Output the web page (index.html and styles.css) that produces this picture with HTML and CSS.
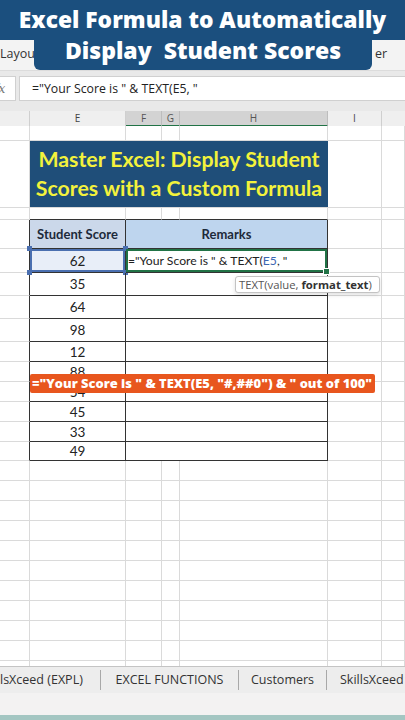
FILE: index.html
```html
<!DOCTYPE html>
<html>
<head>
<meta charset="utf-8">
<link rel="stylesheet" href="styles.css">
</head>
<body>
<div class="page">
  <header class="title">
    <div class="title-wide">Excel Formula to Automatically</div>
    <div class="title-row">
      <span class="rib-tab rib-left">Layou</span>
      <div class="title-narrow">Display&nbsp; Student Scores</div>
      <span class="rib-tab rib-right">er</span>
    </div>
  </header>

  <div class="fbar">
    <div class="namebox"><span class="fx">fx</span></div>
    <div class="finput">="Your Score is " &amp; TEXT(E5, "</div>
  </div>

  <div class="colhdr">
    <div class="ch"></div>
    <div class="ch">E</div>
    <div class="ch sel">F</div>
    <div class="ch sel">G</div>
    <div class="ch sel">H</div>
    <div class="ch">I</div>
    <div class="ch last"></div>
  </div>

  <div class="sheet">
    <div class="row h15"><div class="c"></div><div class="c"></div><div class="c"></div><div class="c"></div><div class="c"></div><div class="c"></div><div class="c"></div></div>
    <div class="row h67"><div class="c"></div><div class="banner"><span>Master Excel: Display Student</span><span>Scores with a Custom Formula</span></div><div class="c"></div><div class="c"></div></div>
    <div class="row h12"><div class="c"></div><div class="c db"></div><div class="c db"></div><div class="c db"></div><div class="c db"></div><div class="c"></div><div class="c"></div></div>

    <div class="row h29"><div class="c dr"></div><div class="t hd hd-e">Student Score</div><div class="t hd hd-r span3">Remarks</div><div class="c"></div><div class="c"></div></div>
    <div class="row h24"><div class="c dr"></div><div class="t num e5">62<i class="hd1"></i><i class="hd2"></i><i class="hd3"></i><i class="hd4"></i></div><div class="t span3 edit">="Your Score is " &amp; TEXT(<span class="ref">E5</span>, "<i class="ghandle"></i></div><div class="c"></div><div class="c"></div></div>
    <div class="row h23"><div class="c dr"></div><div class="t num">35</div><div class="t span3"></div><div class="c"></div><div class="c"></div></div>
    <div class="row h23"><div class="c dr"></div><div class="t num">64</div><div class="t span3"></div><div class="c"></div><div class="c"></div></div>
    <div class="row h23"><div class="c dr"></div><div class="t num">98</div><div class="t span3"></div><div class="c"></div><div class="c"></div></div>
    <div class="row h20"><div class="c dr"></div><div class="t num">12</div><div class="t span3"></div><div class="c"></div><div class="c"></div></div>
    <div class="row h20"><div class="c dr"></div><div class="t num">88</div><div class="t span3"></div><div class="c"></div><div class="c"></div></div>
    <div class="row h20"><div class="c dr"></div><div class="t num">54</div><div class="t span3"></div><div class="c"></div><div class="c"></div></div>
    <div class="row h20"><div class="c dr"></div><div class="t num">45</div><div class="t span3"></div><div class="c"></div><div class="c"></div></div>
    <div class="row h20"><div class="c dr"></div><div class="t num">33</div><div class="t span3"></div><div class="c"></div><div class="c"></div></div>
    <div class="row h19"><div class="c dr"></div><div class="t num">49</div><div class="t span3"></div><div class="c"></div><div class="c"></div></div>

    <div class="row h20"><div class="c"></div><div class="c"></div><div class="c"></div><div class="c"></div><div class="c"></div><div class="c"></div><div class="c"></div></div>
    <div class="row h20"><div class="c"></div><div class="c"></div><div class="c"></div><div class="c"></div><div class="c"></div><div class="c"></div><div class="c"></div></div>
    <div class="row h20"><div class="c"></div><div class="c"></div><div class="c"></div><div class="c"></div><div class="c"></div><div class="c"></div><div class="c"></div></div>
    <div class="row h20"><div class="c"></div><div class="c"></div><div class="c"></div><div class="c"></div><div class="c"></div><div class="c"></div><div class="c"></div></div>
    <div class="row h20"><div class="c"></div><div class="c"></div><div class="c"></div><div class="c"></div><div class="c"></div><div class="c"></div><div class="c"></div></div>
    <div class="row h20"><div class="c"></div><div class="c"></div><div class="c"></div><div class="c"></div><div class="c"></div><div class="c"></div><div class="c"></div></div>
    <div class="row h20"><div class="c"></div><div class="c"></div><div class="c"></div><div class="c"></div><div class="c"></div><div class="c"></div><div class="c"></div></div>
    <div class="row h20"><div class="c"></div><div class="c"></div><div class="c"></div><div class="c"></div><div class="c"></div><div class="c"></div><div class="c"></div></div>
    <div class="row h20"><div class="c"></div><div class="c"></div><div class="c"></div><div class="c"></div><div class="c"></div><div class="c"></div><div class="c"></div></div>
    <div class="row h20"><div class="c"></div><div class="c"></div><div class="c"></div><div class="c"></div><div class="c"></div><div class="c"></div><div class="c"></div></div>
    <div class="row h5"><div class="c nb"></div><div class="c nb"></div><div class="c nb"></div><div class="c nb"></div><div class="c nb"></div><div class="c nb"></div><div class="c nb"></div></div>

    <div class="tooltip">TEXT(value, <b>format_text</b>)</div>
    <div class="callout">="Your Score is " &amp; TEXT(E5, "#,##0") &amp; " out of 100"</div>
  </div>

  <div class="tabs">
    <span class="tab tab1">lsXceed (EXPL)</span>
    <span class="tab tab2">EXCEL FUNCTIONS</span>
    <span class="tab tab3">Customers</span>
    <span class="tab tab4">SkillsXceed</span>
  </div>
  <div class="status"></div>
  <div class="strip"></div>
</div>
</body>
</html>
```

FILE: styles.css
```css
* { box-sizing: border-box; margin: 0; padding: 0; }
html, body { width: 405px; height: 720px; overflow: hidden; background: #f3f3f3; }
body { font-family: "Open Sans", "Noto Sans", sans-serif; }

.page { width: 405px; height: 720px; display: flex; flex-direction: column; background: #f3f3f3; overflow: hidden; }

/* title banner */
.title { height: 70px; display: flex; flex-direction: column; background: #f3f3f3; flex: none; }
.title-wide {
  height: 40px; background: #1b4f7e; color: #fff;
  font-family: "Open Sans", sans-serif; font-weight: 800; font-size: 22.8px;
  line-height: 40px; text-align: center; white-space: nowrap;
}
.title-row { height: 30px; display: flex; align-items: flex-start; }
.rib-tab { font-family: "Open Sans", sans-serif; font-size: 12.5px; color: #333; line-height: 24px; padding-top: 2px; overflow: hidden; white-space: nowrap; }
.rib-left { width: 34px; }
.rib-right { flex: 1; padding-left: 3px; }
.title-narrow {
  width: 338px; height: 30px; background: #1b4f7e; color: #fff;
  border-radius: 0 0 6px 6px;
  font-family: "Open Sans", sans-serif; font-weight: 800; font-size: 23px;
  line-height: 21px; text-align: center; white-space: nowrap;
}

/* formula bar */
.fbar { height: 41px; flex: none; display: flex; align-items: flex-start; gap: 3px; padding-top: 5px; background: #e9e9e9; border-top: 1px solid #dcdcdc; }
.namebox { width: 16px; height: 25px; background: #fff; border: 1px solid #d0d0d0; border-left: none; overflow: hidden; display: flex; justify-content: flex-start; align-items: center; }
.fx { font-family: "DejaVu Serif", serif; font-style: italic; font-size: 12px; color: #777; margin-left: -6px; }
.finput { flex: 1; height: 25px; background: #fff; border: 1px solid #d0d0d0; border-right: none; padding-left: 12px; font-family: "Open Sans", sans-serif; font-size: 12.3px; line-height: 23px; color: #222; white-space: nowrap; }

/* column headers */
.colhdr { height: 15px; flex: none; display: grid; grid-template-columns: 30px 96px 36px 18px 148px 54px 1fr; background: #efefef; }
.ch { border-right: 1px solid #cfcfcf; border-bottom: 1px solid #c8c8c8; font-family: "Open Sans", sans-serif; font-size: 10px; color: #444; text-align: center; line-height: 14px; }
.ch.sel { background: #d3d3d3; color: #555; border-bottom: 2px solid #217346; border-right-color: #bdbdbd; }
.ch.last { border-right: none; }

/* sheet grid */
.sheet { position: relative; flex: none; height: 540px; background: #fff; }
.row { display: grid; grid-template-columns: 30px 96px 36px 18px 148px 54px 1fr; }
.h5 { height: 5px; } .h12 { height: 12px; } .h15 { height: 15px; } .h19 { height: 19px; }
.h20 { height: 20px; } .h23 { height: 23px; } .h24 { height: 24px; } .h29 { height: 29px; } .h67 { height: 67px; }

.c { border-right: 1px solid #dadada; border-bottom: 1px solid #dadada; }
.c.nb { border-bottom: none; }
.c.db { border-bottom: 1.5px solid #333; }
.c.dr { border-right: 1.5px solid #333; }

.banner {
  grid-column: span 4; background: #1f4e79; color: #f3f23c;
  display: flex; flex-direction: column; align-items: center; justify-content: center;
  font-family: Lato, "Open Sans", sans-serif; font-weight: 700; font-size: 21.3px; line-height: 29px;
  border-bottom: 1px solid #dadada; white-space: nowrap;
}

.t { border-right: 1.5px solid #333; border-bottom: 1.5px solid #333; font-family: Lato, "Open Sans", sans-serif; font-size: 13.5px; color: #222; display: flex; align-items: center; position: relative; white-space: nowrap; }
.span3 { grid-column: span 3; }
.num { justify-content: center; }
.hd { justify-content: center; font-weight: 700; font-size: 13px; color: #1d2a3a; }
.hd-e { background: #cbd8ea; }
.hd-r { background: #bed5ee; }

.e5 { background: #e8eef8; box-shadow: inset 0 0 0 2px #4a6fb0; }
.e5 i { position: absolute; width: 5px; height: 5px; background: #4a6fb0; }
.hd1 { left: -3px; top: -3px; } .hd2 { right: -3px; top: -3px; }
.hd3 { left: -3px; bottom: -3px; } .hd4 { right: -3px; bottom: -3px; }

.edit { box-shadow: inset 0 0 0 2px #217346; padding-left: 2px; font-size: 12.2px; overflow: visible; z-index: 1; }
.ref { color: #3c67b2; }
.ghandle { position: absolute; right: -3px; bottom: -3px; width: 5px; height: 5px; background: #217346; border: 1px solid #fff; box-sizing: content-box; }

.tooltip {
  position: absolute; left: 235px; top: 150px; width: 145px; height: 17px;
  background: #fff; border: 1px solid #c3c3c3; border-radius: 3px;
  box-shadow: 0 2px 4px rgba(0,0,0,0.12);
  font-family: "Open Sans", sans-serif; font-size: 11.3px; line-height: 15px; color: #555;
  padding-left: 3px; white-space: nowrap; z-index: 2;
}
.tooltip b { color: #333; font-weight: 700; }

.callout {
  position: absolute; left: 30px; top: 248px; width: 345px; height: 19px;
  background: #e8561e; color: #fff; border-radius: 2px;
  font-family: "Open Sans", sans-serif; font-weight: 800; font-size: 12.9px; line-height: 19px;
  padding-left: 2px; white-space: nowrap; z-index: 3;
}

/* sheet tabs */
.tabs { height: 27px; flex: none; display: flex; align-items: center; background: #ededed; border-top: 1px solid #c4c4c4; }
.tab { font-family: "Open Sans", sans-serif; font-size: 12.5px; color: #333; white-space: nowrap; line-height: 20px; height: 20px; }
.tab1 { width: 100px; padding-left: 0; }
.tab2 { width: 138px; border-left: 1px solid #a8a8a8; text-align: center; }
.tab3 { width: 88px; border-left: 1px solid #a8a8a8; text-align: center; }
.tab4 { flex: 1; border-left: 1px solid #a8a8a8; padding-left: 13px; overflow: hidden; }

.status { height: 22px; flex: none; background: #f3f2f2; }
.strip { height: 5px; flex: none; background: #a3c6c2; }
```
